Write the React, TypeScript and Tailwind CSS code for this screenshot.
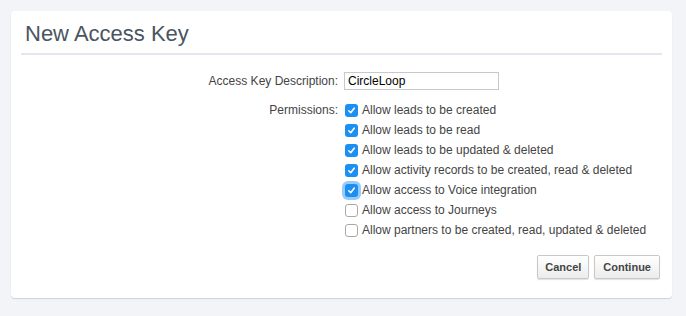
import React, { useState } from 'react';

const permissions = [
  { label: 'Allow leads to be created', checked: true },
  { label: 'Allow leads to be read', checked: true },
  { label: 'Allow leads to be updated & deleted', checked: true },
  { label: 'Allow activity records to be created, read & deleted', checked: true },
  { label: 'Allow access to Voice integration', checked: true, focused: true },
  { label: 'Allow access to Journeys', checked: false },
  { label: 'Allow partners to be created, read, updated & deleted', checked: false },
];

const Check: React.FC<{ checked: boolean; focused?: boolean }> = ({ checked, focused }) => (
  <span
    className={
      checked
        ? focused
          ? 'flex h-[13px] w-[13px] items-center justify-center rounded-[3px] bg-[#1b8ff2] shadow-[0_0_0_3px_rgba(70,160,245,0.55)]'
          : 'flex h-[13px] w-[13px] items-center justify-center rounded-[3px] bg-[#1b8ff2]'
        : 'flex h-[13px] w-[13px] items-center justify-center rounded-[3px] border border-[#a9a9a9] bg-white'
    }
  >
    {checked && (
      <svg width="9" height="9" viewBox="0 0 9 9">
        <path d="M1.8 4.8 L3.7 6.7 L7.2 2.2" fill="none" stroke="white" strokeWidth="1.6" strokeLinecap="round" strokeLinejoin="round" />
      </svg>
    )}
  </span>
);

export default function App() {
  const [description, setDescription] = useState('CircleLoop');

  return (
    <div className="min-h-[316px] bg-[#f3f4f8] p-[11px] pr-[14px] font-['Liberation_Sans',Arial,sans-serif] text-[12px] text-[#333]">
      <div className="rounded-[4px] bg-white px-[10px] pb-[19px] pt-[10px] shadow-[0_1px_1px_rgba(200,205,220,0.9)]">
        <h2 className="border-b-2 border-[#e4e7ef] pb-[7px] pl-[4px] text-[22px] leading-[25px] text-[#4a5561]">
          New Access Key
        </h2>

        <div className="mt-[17px] flex items-center">
          <label className="w-[317px] text-right text-[#444]">Access Key Description:</label>
          <input
            value={description}
            onChange={(e) => setDescription(e.target.value)}
            className="ml-[6px] h-[18px] w-[155px] border border-[#c9c9c9] px-[3px] text-[12px] text-black outline-none"
          />
        </div>

        <div className="mt-[10px] flex items-start">
          <div className="w-[317px] text-right leading-[20px] text-[#444]">Permissions:</div>
          <div className="ml-[7px] flex flex-col">
            {permissions.map((p) => (
              <div key={p.label} className="flex h-[20px] items-center gap-[4px]">
                <Check checked={p.checked} focused={p.focused} />
                <span className="text-[#444]">{p.label}</span>
              </div>
            ))}
          </div>
        </div>

        <div className="mt-[15px] flex justify-end gap-[5px] pr-[2px]">
          <button className="h-[24px] rounded-[2px] border border-[#c8c8c8] bg-gradient-to-b from-white to-[#ececec] px-[7px] text-[11px] font-bold text-[#444] shadow-[0_1px_1px_rgba(0,0,0,0.12)]">
            Cancel
          </button>
          <button className="h-[24px] rounded-[2px] border border-[#c8c8c8] bg-gradient-to-b from-white to-[#ececec] px-[8px] text-[11px] font-bold text-[#444] shadow-[0_1px_1px_rgba(0,0,0,0.12)]">
            Continue
          </button>
        </div>
      </div>
    </div>
  );
}
